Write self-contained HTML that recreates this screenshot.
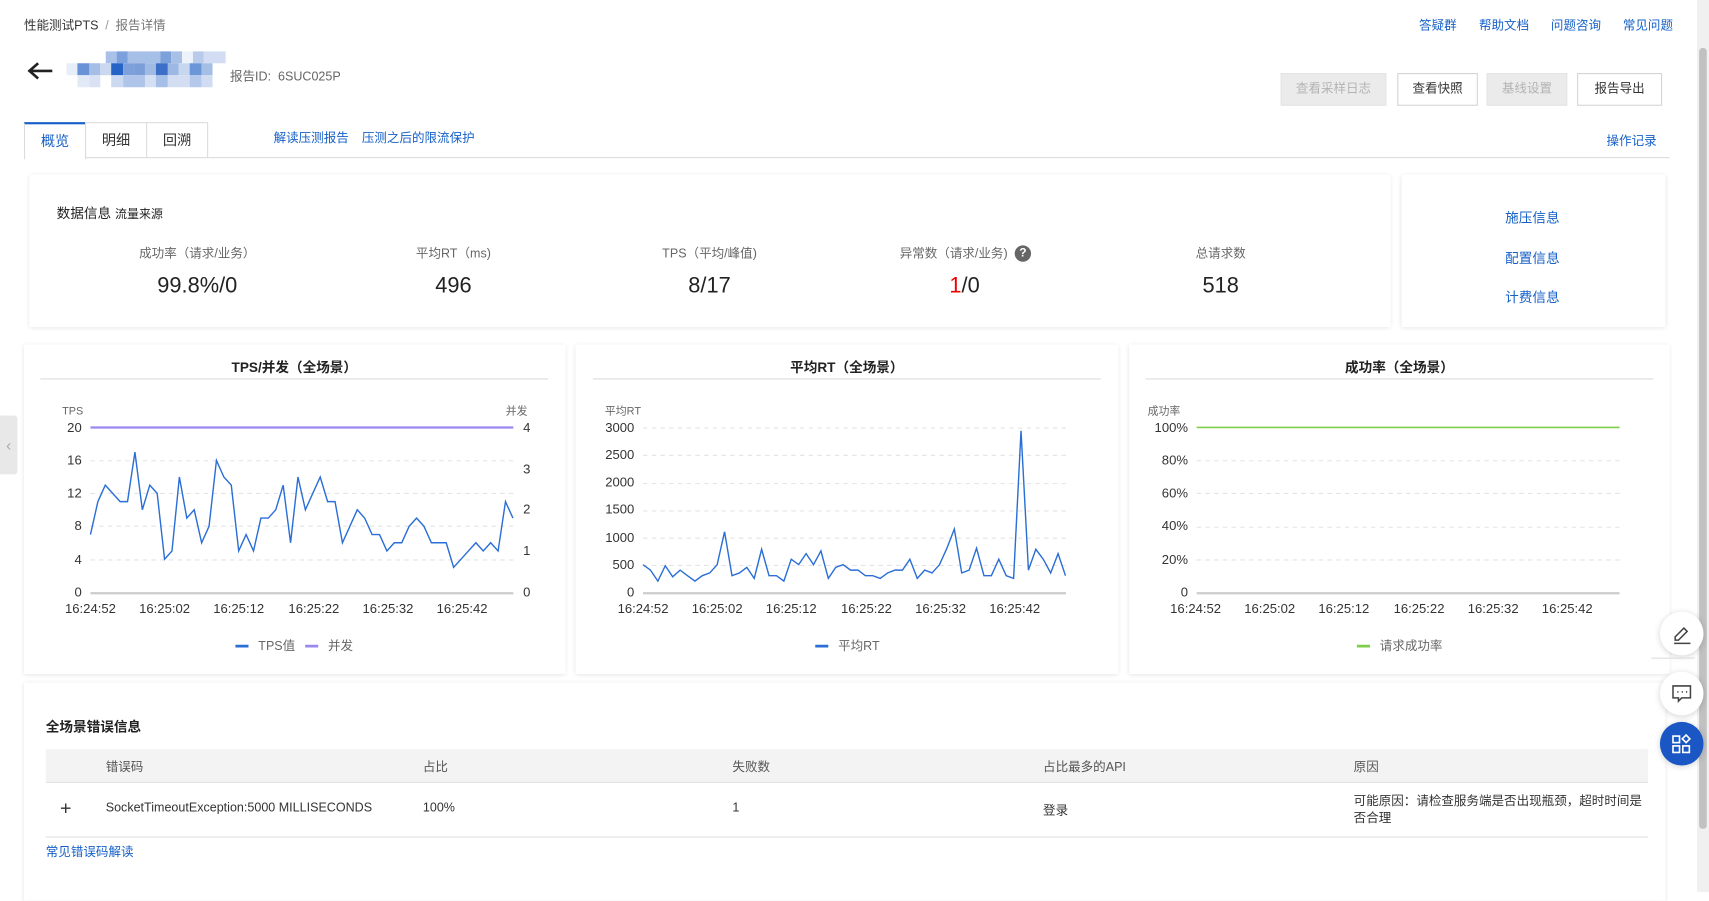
<!DOCTYPE html>
<html><head><meta charset="utf-8"><style>
*{box-sizing:border-box;margin:0;padding:0}
html,body{width:1709px;height:892px;overflow:hidden;background:#fff}
body{font-family:"Liberation Sans","Noto Sans CJK SC",sans-serif;color:#333;font-size:11.5px}
#w{position:absolute;left:0;top:0;width:1568px;height:818px;transform:scale(1.0899,1.0905);transform-origin:0 0;background:#fff}
.a{position:absolute;white-space:nowrap}
.lk{color:#1660c7}
.btn{position:absolute;height:30px;top:67px;border:1px solid #d4d4d4;font-size:11.5px;line-height:28px;text-align:center;background:#fff;color:#333}
.btn.dis{background:#ebebeb;border-color:#e4e4e4;color:#b3b3b3}
.card{position:absolute;background:#fff;box-shadow:0 1px 4px rgba(0,0,0,.12)}
.tab{position:absolute;top:112px;height:33px;border:1px solid #dcdcdc;border-bottom:none;text-align:center;line-height:32px;font-size:13px;background:#fff}
.ml{font-size:11.5px;color:#666;top:224px;transform:translateX(-50%)}
.mv{font-size:20px;color:#222;top:251px;transform:translateX(-50%)}
.fb{position:absolute;width:40px;height:40px;border-radius:50%;background:#fff;box-shadow:0 1px 6px rgba(0,0,0,.18);left:1523px}
</style></head><body><div id="w">
<div class="a" style="left:22px;top:15px;color:#333">性能测试PTS <span style="color:#999;margin:0 3px">/</span> <span style="color:#777">报告详情</span></div>
<div class="a lk" style="left:1302px;top:15px">答疑群</div>
<div class="a lk" style="left:1357px;top:15px">帮助文档</div>
<div class="a lk" style="left:1423px;top:15px">问题咨询</div>
<div class="a lk" style="left:1489px;top:15px">常见问题</div>
<svg class="a" style="left:24px;top:56px" width="26" height="18" viewBox="0 0 26 18"><path d="M24 9H3M11 2L3 9l8 7" stroke="#222" stroke-width="2.4" fill="none"/></svg>
<svg class="a" style="left:61px;top:47px" width="150" height="34">
<g>
<rect x="36" y="0" width="10" height="11" fill="#a9c1e8"/><rect x="46" y="0" width="10" height="11" fill="#7ba0dc"/><rect x="56" y="0" width="30" height="11" fill="#a5bfe6"/><rect x="86" y="0" width="10" height="11" fill="#7ca0da"/><rect x="96" y="0" width="10" height="11" fill="#a8c0e6"/><rect x="106" y="0" width="10" height="11" fill="#eef2fa"/><rect x="116" y="0" width="10" height="11" fill="#b8cbeb"/><rect x="126" y="0" width="20" height="11" fill="#d2ddf3"/>
<rect x="0" y="11" width="10" height="11" fill="#e8eef9"/><rect x="10" y="11" width="11" height="11" fill="#6993d6"/><rect x="21" y="11" width="10" height="11" fill="#a4bee6"/><rect x="31" y="11" width="10" height="11" fill="#cad8f0"/><rect x="41" y="11" width="11" height="11" fill="#2563c6"/><rect x="52" y="11" width="10" height="11" fill="#7d9fda"/><rect x="62" y="11" width="10" height="11" fill="#7b9dd8"/><rect x="72" y="11" width="10" height="11" fill="#a0bae4"/><rect x="82" y="11" width="11" height="11" fill="#3b6fc8"/><rect x="93" y="11" width="10" height="11" fill="#9db8e3"/><rect x="103" y="11" width="10" height="11" fill="#c8d7f0"/><rect x="113" y="11" width="11" height="11" fill="#6b96d8"/><rect x="124" y="11" width="10" height="11" fill="#a5bee6"/>
<rect x="10" y="22" width="11" height="11" fill="#e3eaf7"/><rect x="21" y="22" width="10" height="11" fill="#d8e2f4"/><rect x="41" y="22" width="11" height="11" fill="#cbd9f1"/><rect x="52" y="22" width="20" height="11" fill="#aec4e8"/><rect x="72" y="22" width="10" height="11" fill="#d4dff3"/><rect x="82" y="22" width="11" height="11" fill="#a6bfe7"/><rect x="93" y="22" width="20" height="11" fill="#d3def3"/><rect x="113" y="22" width="11" height="11" fill="#b4c8eb"/><rect x="124" y="22" width="10" height="11" fill="#d0dcf2"/>
</g></svg>
<div class="a" style="left:211px;top:62px;color:#666">报告ID:&nbsp; 6SUC025P</div>
<div class="btn dis" style="left:1175px;width:97px">查看采样日志</div>
<div class="btn" style="left:1282px;width:74px">查看快照</div>
<div class="btn dis" style="left:1364px;width:74px">基线设置</div>
<div class="btn" style="left:1447px;width:78px">报告导出</div>
<div class="a" style="left:22px;top:144px;width:1510px;height:1px;background:#dcdcdc"></div>
<div class="tab" style="left:22px;width:57px;border-top:2px solid #1660c7;color:#1660c7;height:34px">概览</div>
<div class="tab" style="left:78px;width:57px;border-bottom:1px solid #dcdcdc">明细</div>
<div class="tab" style="left:134px;width:57px;border-bottom:1px solid #dcdcdc">回溯</div>
<div class="a lk" style="left:251px;top:118px">解读压测报告</div>
<div class="a lk" style="left:332px;top:118px">压测之后的限流保护</div>
<div class="a lk" style="left:1474px;top:121px">操作记录</div>

<div class="card" style="left:27px;top:160px;width:1249px;height:140px"></div>
<div class="a" style="left:52px;top:185px;font-size:12.5px;color:#222">数据信息 <span style="font-size:11px">流量来源</span></div>
<div class="a ml" style="left:181px">成功率（请求/业务）</div><div class="a mv" style="left:181px">99.8%/0</div>
<div class="a ml" style="left:416px">平均RT（ms)</div><div class="a mv" style="left:416px">496</div>
<div class="a ml" style="left:651px">TPS（平均/峰值)</div><div class="a mv" style="left:651px">8/17</div>
<div class="a ml" style="left:875px">异常数（请求/业务)</div><div class="a" style="left:931px;top:225px;width:15px;height:15px;border-radius:50%;background:#666;color:#fff;font-size:11px;text-align:center;line-height:15px;font-weight:bold">?</div><div class="a mv" style="left:885px"><span style="color:#e00">1</span>/0</div>
<div class="a ml" style="left:1120px">总请求数</div><div class="a mv" style="left:1120px">518</div>
<div class="card" style="left:1286px;top:160px;width:242px;height:140px"></div>
<div class="a lk" style="left:1381px;top:189px;font-size:12.5px">施压信息</div>
<div class="a lk" style="left:1381px;top:226px;font-size:12.5px">配置信息</div>
<div class="a lk" style="left:1381px;top:262px;font-size:12.5px">计费信息</div>

<div class="card" style="left:22px;top:316px;width:497px;height:302px"></div>
<div class="card" style="left:528px;top:316px;width:498px;height:302px"></div>
<div class="card" style="left:1036px;top:316px;width:496px;height:302px"></div>
<svg class="a" style="left:0;top:316px" width="1568" height="302" viewBox="0 316 1568 302" font-family="Liberation Sans,Noto Sans CJK SC,sans-serif">
<g font-size="12.5" font-weight="bold" fill="#222" text-anchor="middle"><text x="270" y="341">TPS/并发（全场景）</text><text x="777" y="341">平均RT（全场景）</text><text x="1284" y="341">成功率（全场景）</text></g>
<g stroke="#ddd"><path d="M37 347.5H503M544 347.5H1010M1051 347.5H1517"/></g>
<g stroke="#e3e3e3" stroke-dasharray="4 4"><path d="M83 513.5H471M83 482.5H471M83 452.5H471M83 422.5H471M590 518.5H978M590 493.5H978M590 468.5H978M590 443.5H978M590 417.5H978M590 392.5H978M1098 513.5H1486M1098 483.5H1486M1098 452.5H1486M1098 422.5H1486"/></g>
<g stroke="#ccc" stroke-width="2"><path d="M83 544H471M590 544H978M1098 544H1486"/></g>
<g font-size="12" fill="#333" text-anchor="end">
<text x="75" y="396">20</text><text x="75" y="426">16</text><text x="75" y="456">12</text><text x="75" y="486">8</text><text x="75" y="517">4</text><text x="75" y="547">0</text>
<text x="582" y="396">3000</text><text x="582" y="421">2500</text><text x="582" y="446">2000</text><text x="582" y="471">1500</text><text x="582" y="497">1000</text><text x="582" y="522">500</text><text x="582" y="547">0</text>
<text x="1090" y="396">100%</text><text x="1090" y="426">80%</text><text x="1090" y="456">60%</text><text x="1090" y="486">40%</text><text x="1090" y="517">20%</text><text x="1090" y="547">0</text></g>
<g font-size="12" fill="#333" text-anchor="start"><text x="480" y="396">4</text><text x="480" y="434">3</text><text x="480" y="471">2</text><text x="480" y="509">1</text><text x="480" y="547">0</text></g>
<g font-size="10" fill="#666"><text x="57" y="380">TPS</text><text x="464" y="380">并发</text><text x="555" y="380">平均RT</text><text x="1053" y="380">成功率</text></g>
<g font-size="12" fill="#333" text-anchor="middle">
<text x="83" y="562">16:24:52</text><text x="151" y="562">16:25:02</text><text x="219" y="562">16:25:12</text><text x="288" y="562">16:25:22</text><text x="356" y="562">16:25:32</text><text x="424" y="562">16:25:42</text>
<text x="590" y="562">16:24:52</text><text x="658" y="562">16:25:02</text><text x="726" y="562">16:25:12</text><text x="795" y="562">16:25:22</text><text x="863" y="562">16:25:32</text><text x="931" y="562">16:25:42</text>
<text x="1097" y="562">16:24:52</text><text x="1165" y="562">16:25:02</text><text x="1233" y="562">16:25:12</text><text x="1302" y="562">16:25:22</text><text x="1370" y="562">16:25:32</text><text x="1438" y="562">16:25:42</text></g>
<path d="M83 392H471" stroke="#9b87f2" stroke-width="2"/>
<path d="M1098 392H1486" stroke="#7ccf48" stroke-width="1.5"/>
<polyline fill="none" stroke="#2a6ed6" stroke-width="1.3" points="83.0,490.2 89.8,460.0 96.6,444.9 103.4,452.4 110.2,460.0 117.0,460.0 123.8,414.6 130.6,467.5 137.4,444.9 144.2,452.4 151.0,512.8 157.8,505.2 164.6,437.4 171.4,475.1 178.2,467.5 185.0,497.7 191.8,482.6 198.6,422.2 205.4,437.4 212.2,444.9 219.0,505.2 225.8,490.2 232.6,505.2 239.4,475.1 246.2,475.1 253.0,467.5 259.8,444.9 266.6,497.7 273.4,437.4 280.2,467.5 287.0,452.4 293.8,437.4 300.6,460.0 307.4,460.0 314.2,497.7 321.0,482.6 327.8,467.5 334.6,475.1 341.4,490.2 348.2,490.2 355.0,505.2 361.8,497.7 368.6,497.7 375.4,482.6 382.2,475.1 389.0,482.6 395.8,497.7 402.6,497.7 409.4,497.7 416.2,520.3 423.0,512.8 429.8,505.2 436.6,497.7 443.4,505.2 450.2,497.7 457.0,505.2 463.8,460.0 470.6,475.1"/>
<polyline fill="none" stroke="#2a6ed6" stroke-width="1.3" points="590.0,517.8 596.8,522.8 603.6,532.9 610.4,518.8 617.2,528.9 624.0,522.8 630.8,527.9 637.6,532.9 644.4,527.9 651.2,525.4 658.0,517.8 664.8,487.6 671.6,527.9 678.4,525.4 685.2,520.3 692.0,530.4 698.8,503.7 705.6,527.9 712.4,527.9 719.2,532.9 726.0,512.8 732.8,517.8 739.6,507.7 746.4,517.8 753.2,505.2 760.0,530.4 766.8,520.3 773.6,517.8 780.4,522.8 787.2,522.8 794.0,527.9 800.8,527.9 807.6,530.4 814.4,525.4 821.2,522.8 828.0,522.8 834.8,512.8 841.6,530.4 848.4,522.8 855.2,525.4 862.0,517.8 868.8,502.7 875.6,485.1 882.4,525.4 889.2,522.8 896.0,502.7 902.8,527.9 909.6,527.9 916.4,512.8 923.2,527.9 930.0,530.4 936.8,395.0 943.6,522.8 950.4,503.7 957.2,512.8 964.0,525.4 970.8,507.7 977.6,527.9"/>
<g font-size="11.5" fill="#666"><path d="M216 592.5H228" stroke="#2a6ed6" stroke-width="2.5"/><text x="237" y="596">TPS值</text><path d="M280 592.5H292" stroke="#9b87f2" stroke-width="2.5"/><text x="301" y="596">并发</text>
<path d="M748 592.5H760" stroke="#2a6ed6" stroke-width="2.5"/><text x="769" y="596">平均RT</text>
<path d="M1245 592.5H1257" stroke="#7ccf48" stroke-width="2.5"/><text x="1266" y="596">请求成功率</text></g>
</svg>

<div class="card" style="left:22px;top:626px;width:1506px;height:200px"></div>
<div class="a" style="left:42px;top:656px;font-size:12.5px;font-weight:bold;color:#222">全场景错误信息</div>
<div class="a" style="left:42px;top:687px;width:1470px;height:31px;background:#f3f3f3;border-bottom:1px solid #e2e2e2"></div>
<div class="a" style="left:97px;top:695px;color:#555">错误码</div>
<div class="a" style="left:388px;top:695px;color:#555">占比</div>
<div class="a" style="left:672px;top:695px;color:#555">失败数</div>
<div class="a" style="left:957px;top:695px;color:#555">占比最多的API</div>
<div class="a" style="left:1242px;top:695px;color:#555">原因</div>
<div class="a" style="left:55px;top:731px;font-size:18px;color:#333">+</div>
<div class="a" style="left:97px;top:735px;color:#333">SocketTimeoutException:5000 MILLISECONDS</div>
<div class="a" style="left:388px;top:735px">100%</div>
<div class="a" style="left:672px;top:735px">1</div>
<div class="a" style="left:957px;top:735px">登录</div>
<div class="a" style="left:1242px;top:727px;line-height:16px">可能原因：请检查服务端是否出现瓶颈，超时时间是<br>否合理</div>
<div class="a" style="left:42px;top:767px;width:1470px;height:1px;background:#e2e2e2"></div>
<div class="a lk" style="left:42px;top:773px">常见错误码解读</div>

<div class="a" style="left:0;top:381px;width:16px;height:54px;background:#e8e8e8;border-radius:0 3px 3px 0;color:#aaa;font-size:14px;line-height:54px;text-align:center">‹</div>
<div class="a" style="left:1557px;top:0;width:11px;height:818px;background:#f0f0f0"></div>
<div class="a" style="left:1559px;top:44px;width:7px;height:716px;background:#c1c1c1;border-radius:3px"></div>
<div class="fb" style="top:561px"><svg width="40" height="40"><path d="M14 23l8-8 3 3-8 8h-3z M13 29h15" stroke="#444" stroke-width="1.4" fill="none"/></svg></div>
<div class="a" style="left:1515px;top:603px;width:40px;height:1px;background:#ddd"></div>
<div class="fb" style="top:616px"><svg width="40" height="40"><path d="M12 13h16v11h-8l-3 3v-3h-5z" stroke="#444" stroke-width="1.4" fill="none"/><path d="M16 18.5h1M20 18.5h1M24 18.5h1" stroke="#444" stroke-width="1.6"/></svg></div>
<div class="fb" style="top:662px;background:#1a56c4"><svg width="40" height="40"><g stroke="#fff" stroke-width="1.5" fill="none"><rect x="12" y="13" width="6" height="6"/><rect x="12" y="22" width="6" height="6"/><rect x="21" y="22" width="6" height="6"/><path d="M24 12l3.5 3.5-3.5 3.5-3.5-3.5z"/></g></svg></div>
</div></body></html>
